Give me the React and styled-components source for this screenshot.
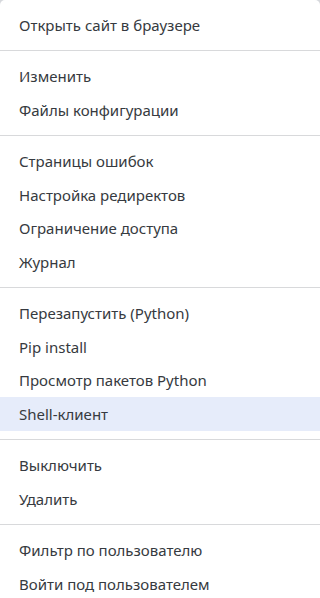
import React from "react";
import styled, { createGlobalStyle } from "styled-components";

const Global = createGlobalStyle`
  html, body { margin: 0; padding: 0; background: #d6d8dc; }
  body { font-family: "Noto Sans", "Open Sans", sans-serif; }
`;

const Menu = styled.ul`
  list-style: none;
  margin: 0;
  padding: 8px 0;
  width: 100%;
  min-height: 598px;
  box-sizing: border-box;
  background: #ffffff;
  border-radius: 5px;
  display: flex;
  flex-direction: column;
`;

const Item = styled.li`
  height: 33.5px;
  display: flex;
  align-items: center;
  padding: 0 19px;
  font-size: 15px;
  color: #363a40;
  white-space: nowrap;
  background: ${(p) => (p.$active ? "#e6ecfa" : "transparent")};
  cursor: pointer;
`;

const Separator = styled.li`
  height: 1px;
  margin: 8.5px 0;
  background: #d8d9db;
`;

const groups = [
  ["Открыть сайт в браузере"],
  ["Изменить", "Файлы конфигурации"],
  ["Страницы ошибок", "Настройка редиректов", "Ограничение доступа", "Журнал"],
  ["Перезапустить (Python)", "Pip install", "Просмотр пакетов Python", "Shell-клиент"],
  ["Выключить", "Удалить"],
  ["Фильтр по пользователю", "Войти под пользователем"],
];

export default function App() {
  return (
    <>
      <Global />
      <Menu>
        {groups.map((g, gi) => (
          <React.Fragment key={gi}>
            {gi > 0 && <Separator />}
            {g.map((t) => (
              <Item key={t} $active={t === "Shell-клиент"}>
                {t}
              </Item>
            ))}
          </React.Fragment>
        ))}
      </Menu>
    </>
  );
}
